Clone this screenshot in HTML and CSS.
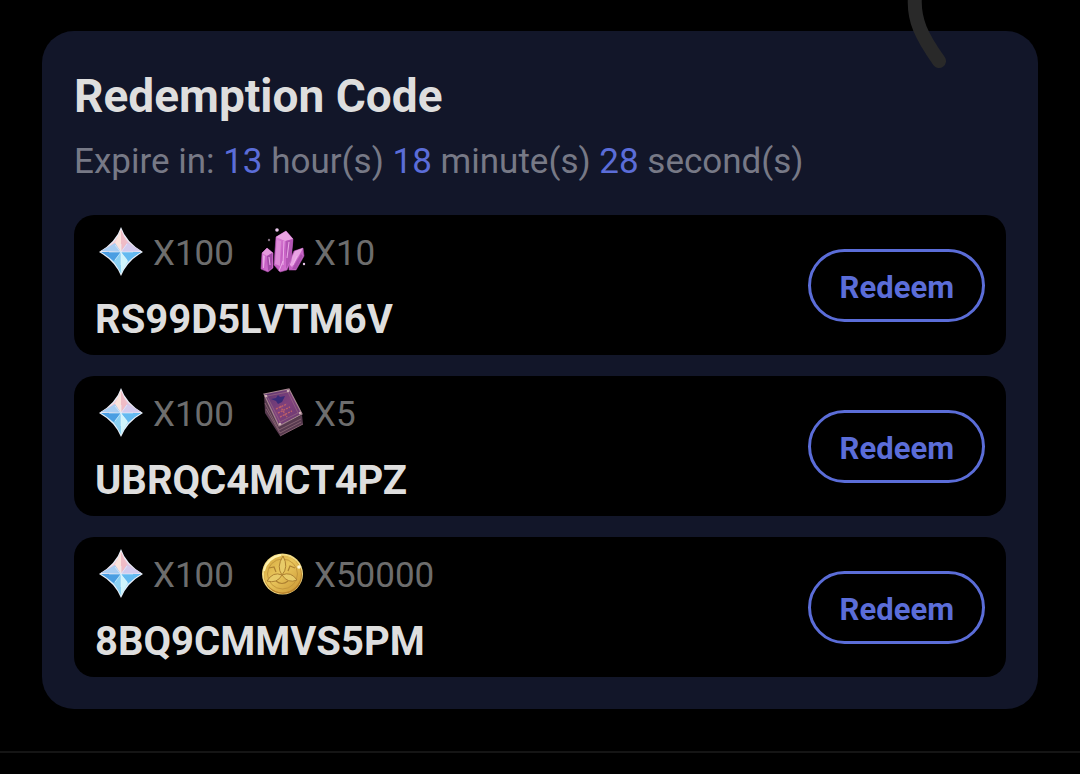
FILE: index.html
```html
<!DOCTYPE html>
<html lang="en">
<head>
<meta charset="utf-8">
<meta name="viewport" content="width=device-width, initial-scale=1">
<title>Redemption Code</title>
<link rel="stylesheet" href="styles.css">
</head>
<body>
<svg class="defs" aria-hidden="true">
  <defs>
    <linearGradient id="gem-top" x1="0" y1="0" x2="1" y2="1"><stop offset="0" stop-color="#fff3ed"/><stop offset=".5" stop-color="#f3c8d3"/><stop offset="1" stop-color="#c9b8e6"/></linearGradient>
    <linearGradient id="gem-low" x1="0" y1="0" x2="0" y2="1"><stop offset="0" stop-color="#4aa5e8"/><stop offset="1" stop-color="#b5ecfb"/></linearGradient>
    <linearGradient id="crystal" x1="0" y1="0" x2="1" y2="1"><stop offset="0" stop-color="#e48fdc"/><stop offset=".5" stop-color="#c55fc3"/><stop offset="1" stop-color="#dc7fd8"/></linearGradient>
    <linearGradient id="cover" x1="0" y1="0" x2="1" y2="1"><stop offset="0" stop-color="#58366f"/><stop offset=".5" stop-color="#80407d"/><stop offset="1" stop-color="#64386d"/></linearGradient>
    <linearGradient id="gold" x1="0" y1="0" x2="1" y2="1"><stop offset="0" stop-color="#d3a63c"/><stop offset=".45" stop-color="#e9c65c"/><stop offset="1" stop-color="#c99431"/></linearGradient>
    <symbol id="primogem" viewBox="0 0 48 50">
      <path fill="#e8eef8" d="M24 0Q29 15 46 25Q30 34 24 49Q18 34 2 25Q19 15 24 0Z"/>
      <path fill="url(#gem-top)" d="M24 2Q28 16 44 24L24 25L4 24Q20 16 24 2Z"/>
      <path fill="#efbcc6" d="M24 3L30 16L24 25Z"/>
      <path fill="#fbe3dc" d="M24 3L18 16L24 25Z"/>
      <path fill="#a9cef3" d="M4 24L18 16L24 25Z"/>
      <path fill="#d3cbee" d="M30 16L44 24L24 25Z"/>
      <path fill="url(#gem-low)" d="M4 25L24 25L44 25Q29 33 24 47Q19 33 4 25Z"/>
      <path fill="#4a9ee2" d="M5 25L24 25L17 34Z"/>
      <path fill="#64baf0" d="M24 25L43 25L31 34Z"/>
      <path fill="#d0f4fb" d="M24 25L31 34L24 46Z"/>
      <path fill="#8bd1f4" d="M24 25L17 34L24 46Z"/>
      <path fill="none" stroke="#e4f5fd" stroke-width=".6" d="M24 17V38M12 25H36M18 18L30 33M30 17L18 33"/>
    </symbol>
    <symbol id="ore" viewBox="0 0 48 50">
      <path fill="url(#crystal)" stroke="#a84ca9" stroke-width=".6" d="M4 26L9 21L15 26L15 41L10 45L3 42Z"/>
      <path fill="#e49adc" d="M4 26L9 21L15 26L9 29Z"/>
      <path fill="#a34aa8" d="M9 29L14 26L14 41L10 44Z"/>
      <path fill="#e9a8e6" d="M5 28L7 29L6 41L5 41Z"/>
      <path fill="url(#crystal)" stroke="#a84ca9" stroke-width=".6" d="M36 24L45 21L46 29L38 43L31 43L31 35Z"/>
      <path fill="#e9a3e4" d="M37 24L45 21L43 25L34 40L31 37Z"/>
      <path fill="#ab4fae" d="M43 27L45 29L38 42L34 42Z"/>
      <path fill="url(#crystal)" stroke="#ad50b0" stroke-width=".6" d="M18 10L28 4L35 12L33 34L29 43L22 45L16 38Z"/>
      <path fill="#e9a3e2" d="M18 10L28 4L35 12L27 14Z"/>
      <path fill="#b455b5" d="M28 14L35 12L33 33L28 42Z"/>
      <path fill="#dd8bd7" d="M19 13L23 14L22 39L17 37Z"/>
      <path fill="none" stroke="#f0b4ec" stroke-width=".9" d="M26 14L25 38M31 15L29 31M11 30L12 38M21 44L25 34M39 29L35 38"/>
      <g fill="#e9c6eb"><circle cx="19" cy="3" r="1.8"/><circle cx="11" cy="13" r="1.2" opacity=".55"/><circle cx="46" cy="37" r="1.2"/></g>
    </symbol>
    <symbol id="book" viewBox="0 0 48 50">
      <path fill="#573a4f" d="M6 6L7 25L22 48L45 36L44 27L21 38Z"/>
      <path fill="none" stroke="#84616f" stroke-width="1" d="M7 15L21 42L43 31M8 21L22 45L43 34M22 48L45 36"/>
      <path fill="url(#cover)" stroke="#a68490" stroke-width="1.2" d="M6 6L31 1L44 26L21 38Z"/>
      <path fill="none" stroke="#94647f" stroke-width=".8" d="M9 8L30 4L40 25L22 34Z"/>
      <path fill="#382a78" d="M13 11L18 10L20 7L22 9L27 8L24 14L20 16L18 13Z"/>
      <g fill="none" stroke="#bd5f67" stroke-width="1.4" stroke-dasharray="2 1"><path d="M18 21L29 16M20 25L32 19M22 29L34 23M22 18L29 29"/></g>
      <g fill="#ceb0b5"><circle cx="8" cy="8" r="1.3"/><circle cx="30" cy="3" r="1.3"/><circle cx="42" cy="25" r="1.3"/><circle cx="22" cy="36" r="1.3"/></g>
    </symbol>
    <symbol id="coin" viewBox="0 0 48 50">
      <circle cx="24.500" cy="25" r="20.5" fill="#f3dc85"/>
      <circle cx="25" cy="26" r="19" fill="#b9832c"/>
      <circle cx="24.500" cy="25" r="18.5" fill="url(#gold)"/>
      <circle cx="24.500" cy="25" r="15" fill="none" stroke="#c1943a" stroke-width=".9"/>
      <g fill="#e8cb68" stroke="#ad8031" stroke-width="1"><path d="M24 26Q18 18 25 7Q31 18 24 26Z"/><path d="M24 26Q33 22 39 31Q30 35 24 26Z"/><path d="M24 26Q15 22 9 32Q19 35 24 26Z"/></g>
      <path fill="none" stroke="#ad8031" stroke-width="1.2" d="M11 19L16 18L18 23M37 19L32 17L30 22M18 32Q24 37 30 32"/>
      <path fill="none" stroke="#fff2ac" stroke-width="1.8" d="M6 22Q9 9 23 6"/>
      <circle cx="41" cy="18" r="1.8" fill="#fff8d5"/>
    </symbol>
  </defs>
</svg>

<main class="page">
  <section class="card" aria-labelledby="card-title">
    <h1 class="card-title" id="card-title">Redemption Code</h1>
    <p class="expiry">Expire in: <span class="time">13</span> hour(s) <span class="time">18</span> minute(s) <span class="time">28</span> second(s)</p>
    <ul class="codes">
      <li class="code-row">
        <div class="code-info">
          <div class="rewards">
            <span class="reward"><svg class="reward-icon" aria-hidden="true"><use href="#primogem"/></svg><span class="amount">X100</span></span>
            <span class="reward"><svg class="reward-icon" aria-hidden="true"><use href="#ore"/></svg><span class="amount">X10</span></span>
          </div>
          <div class="code">RS99D5LVTM6V</div>
        </div>
        <button class="redeem" type="button">Redeem</button>
      </li>
      <li class="code-row">
        <div class="code-info">
          <div class="rewards">
            <span class="reward"><svg class="reward-icon" aria-hidden="true"><use href="#primogem"/></svg><span class="amount">X100</span></span>
            <span class="reward"><svg class="reward-icon" aria-hidden="true"><use href="#book"/></svg><span class="amount">X5</span></span>
          </div>
          <div class="code">UBRQC4MCT4PZ</div>
        </div>
        <button class="redeem" type="button">Redeem</button>
      </li>
      <li class="code-row">
        <div class="code-info">
          <div class="rewards">
            <span class="reward"><svg class="reward-icon" aria-hidden="true"><use href="#primogem"/></svg><span class="amount">X100</span></span>
            <span class="reward"><svg class="reward-icon" aria-hidden="true"><use href="#coin"/></svg><span class="amount">X50000</span></span>
          </div>
          <div class="code">8BQ9CMMVS5PM</div>
        </div>
        <button class="redeem" type="button">Redeem</button>
      </li>
    </ul>
  </section>
  <svg class="stroke" viewBox="0 0 50 72" aria-hidden="true"><path d="M15 -4C13 20 22 37 39 61" fill="none" stroke="#292929" stroke-width="14" stroke-linecap="round"/></svg>
</main>
<hr class="divider">
</body>
</html>
```

FILE: styles.css
```css
* {
  box-sizing: border-box;
}

body {
  margin: 0;
  background: #000;
  color: #dedede;
  font-family: Roboto, "Liberation Sans", sans-serif;
}

.defs {
  position: absolute;
  width: 0;
  height: 0;
}

.page {
  position: relative;
  padding: 31px 42px 42px;
}

.card {
  padding: 37px 32px 32px;
  border-radius: 32px;
  background: #121629;
}

.card-title {
  margin: 0;
  font-size: 46px;
  line-height: 56px;
  font-weight: 700;
}

.expiry {
  margin: 16px 0 31px;
  color: #777986;
  font-size: 35px;
  line-height: 44px;
}

.time {
  color: #5b6dd8;
}

.codes {
  display: grid;
  gap: 21px;
  margin: 0;
  padding: 0;
  list-style: none;
}

.code-row {
  display: flex;
  align-items: center;
  justify-content: space-between;
  padding: 12px 21px;
  border-radius: 20px;
  background: #000;
}

.rewards {
  display: flex;
  gap: 24px;
  padding-left: 2px;
}

.reward {
  display: flex;
  align-items: center;
  gap: 8px;
  color: #6d6d6d;
  font-size: 35px;
  line-height: 46px;
}

.reward-icon {
  width: 48px;
  height: 50px;
}

.amount {
  padding-top: 4px;
}

.code {
  margin-top: 20px;
  font-size: 40px;
  line-height: 46px;
  font-weight: 700;
}

.redeem {
  padding: 4px 28px 0 29px;
  border: 3px solid #5b6dd8;
  border-radius: 37px;
  background: transparent;
  color: #5b6dd8;
  font-family: inherit;
  font-size: 31px;
  line-height: 63px;
  font-weight: 700;
}

.stroke {
  position: absolute;
  top: 0;
  right: 130px;
  width: 50px;
  height: 72px;
}

.divider {
  height: 2px;
  margin: 0;
  border: 0;
  background: #151515;
}
```
